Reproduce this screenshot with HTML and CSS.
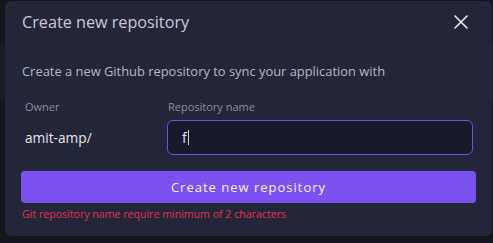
FILE: index.html
```html
<!DOCTYPE html>
<html lang="en">
<head>
<meta charset="utf-8">
<title>Create new repository</title>
<link rel="stylesheet" href="styles.css">
</head>
<body>
<div class="backdrop">
  <div class="modal">
    <div class="header">
      <h2 class="title">Create new repository</h2>
      <button class="close" aria-label="Close">
        <svg width="14" height="14" viewBox="0 0 14 14"><path d="M1 1L13 13M13 1L1 13" stroke="#ecedf2" stroke-width="1.6" stroke-linecap="round" fill="none"/></svg>
      </button>
    </div>
    <p class="subtitle">Create a new Github repository to sync your application with</p>
    <div class="fields">
      <div class="label">Owner</div>
      <div class="label label-repo">Repository name</div>
      <div class="owner">amit-amp/</div>
      <div class="input"><span class="value">f</span><span class="caret"></span></div>
    </div>
    <button class="submit">Create new repository</button>
    <div class="error">Git repository name require minimum of 2 characters</div>
  </div>
</div>
</body>
</html>
```
FILE: styles.css
```css
* { box-sizing: border-box; }
html, body { margin: 0; height: 100%; }
body {
  background: #161720;
  font-family: "Open Sans", "Noto Sans", sans-serif;
  overflow: hidden;
}
.backdrop {
  height: 100%;
  padding: 1px 1px 0 5px;
  background: linear-gradient(to bottom, #14151d 0, #14151d 44px, #1b1c27 44px, #1b1c27 101px, #14151d 101px);
}
.modal {
  width: 487px;
  height: 235px;
  background: #232638;
  border-radius: 6px;
  padding: 0 16px;
}
.header {
  height: 42px;
  display: flex;
  align-items: center;
  justify-content: space-between;
  padding-left: 1px;
}
.title {
  margin: 0;
  font-size: 16.2px;
  font-weight: 400;
  color: #c9cbd4;
}
.close {
  background: none;
  border: 0;
  padding: 0;
  margin-right: 8px;
  width: 14px;
  height: 14px;
  display: flex;
}
.subtitle {
  margin: 19px 0 0 1px;
  font-size: 12.9px;
  line-height: 18px;
  color: #b7b9c4;
}
.fields {
  display: grid;
  grid-template-columns: 142px 306px;
  padding-left: 4px;
  margin-top: 20px;
  align-items: center;
}
.label {
  font-size: 11px;
  line-height: 14px;
  color: #8b8e9c;
  margin-bottom: 6px;
}
.label-repo { padding-left: 1px; }
.owner {
  font-size: 13.7px;
  color: #e7e8ee;
}
.input {
  height: 35px;
  border: 1px solid #6e51dc;
  border-radius: 6px;
  background: #171a2b;
  display: flex;
  align-items: center;
  padding-left: 14px;
}
.value {
  font-size: 14px;
  color: #e3e4ea;
}
.caret {
  width: 1px;
  height: 15px;
  background: #d0d0d8;
  margin-left: 1px;
}
.submit {
  display: block;
  width: 455px;
  height: 32px;
  margin-top: 16px;
  border: 0;
  border-radius: 4px;
  background: #7a52ee;
  color: #f3f1fd;
  font-family: inherit;
  font-size: 13px;
  font-weight: 500;
  letter-spacing: 1px;
}
.error {
  margin: 4px 0 0 1px;
  font-size: 10.6px;
  line-height: 14px;
  color: #e2354f;
}
```
